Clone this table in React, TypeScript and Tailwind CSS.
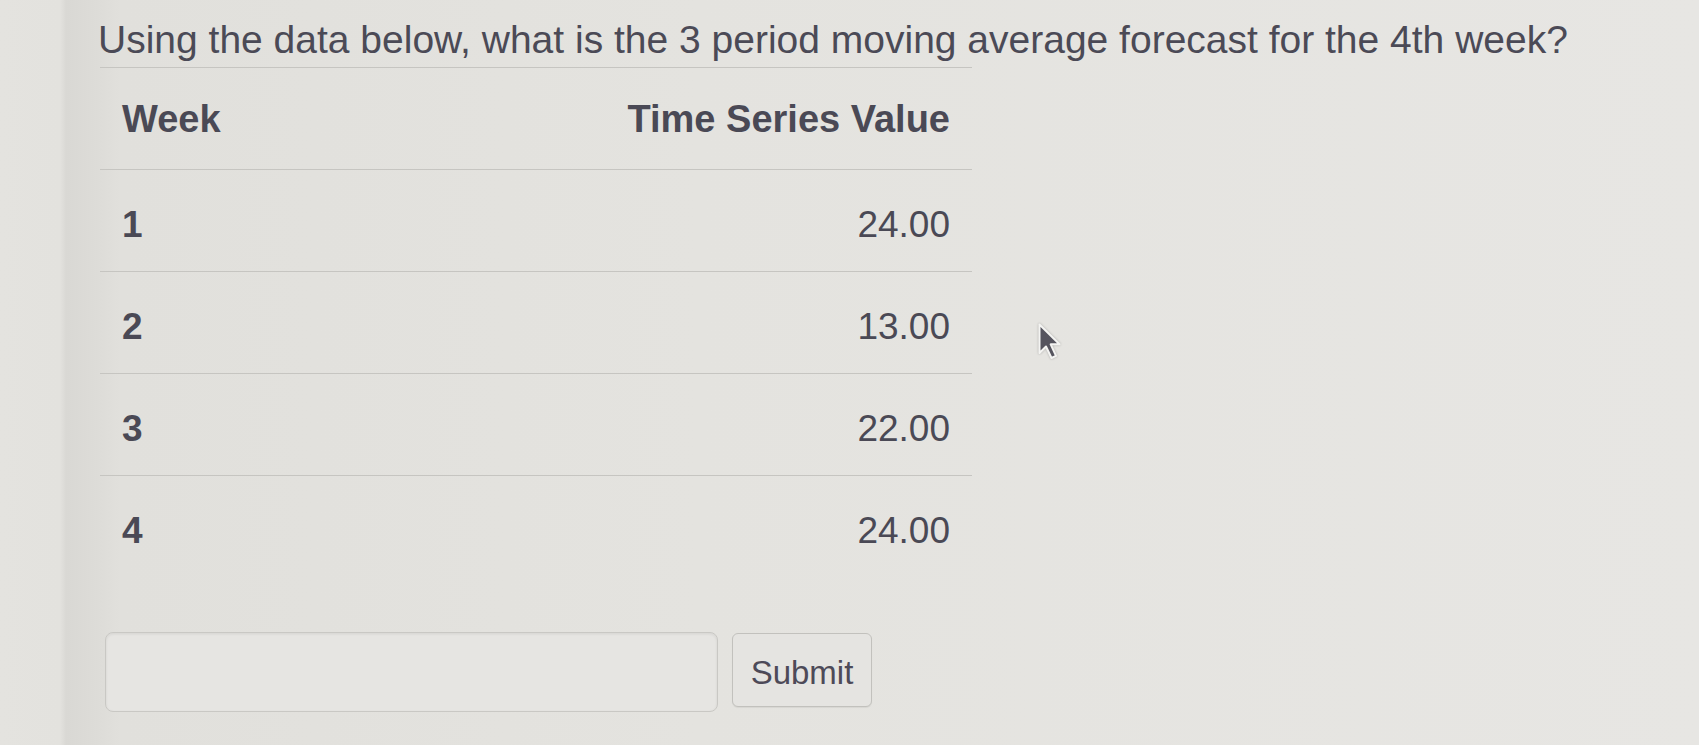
import React from 'react'

const rows = [
  { week: '1', value: '24.00' },
  { week: '2', value: '13.00' },
  { week: '3', value: '22.00' },
  { week: '4', value: '24.00' },
]

function Cursor() {
  return (
    <svg
      className="absolute left-[1035px] top-[321px] drop-shadow-[0_0_1px_rgba(0,0,0,0.25)]"
      width="30"
      height="46"
      viewBox="0 0 30 46"
    >
      <path
        d="M4.5 3.5 L4.5 32 L11 25.5 L16.5 37 L21 34.8 L15.7 23.3 L24.5 23.3 Z"
        fill="#55545e"
        stroke="#f4f4f2"
        strokeWidth="2"
        strokeLinejoin="round"
      />
    </svg>
  )
}

export default function App() {
  return (
    <div className="relative h-[745px] w-[1699px] overflow-hidden bg-[linear-gradient(90deg,#e4e3df_0px,#e3e2de_60px,#d9d8d4_66px,#dddcd8_98px,#e1e0dc_120px,#e4e3df_700px,#e7e6e3_1699px)] font-['Liberation_Sans',Arial,sans-serif] text-[#4a4955]">
      {/* Question */}
      <h1 className="pl-[98px] pt-[20px] text-[39px] font-normal leading-none text-[#4b4a56]">
        Using the data below, what is the 3 period moving average forecast for the 4th week?
      </h1>

      {/* Data table */}
      <table className="ml-[100px] mt-[8px] w-[872px] border-collapse">
        <thead>
          <tr className="border-t border-b border-[#c6c5c1]">
            <th className="pl-[22px] pt-[32px] pb-[31px] text-left text-[38px] font-bold leading-none text-[#4a4955]">
              Week
            </th>
            <th className="pr-[22px] pt-[32px] pb-[31px] text-right text-[38px] font-bold leading-none text-[#4a4955]">
              Time Series Value
            </th>
          </tr>
        </thead>
        <tbody>
          {rows.map((r, i) => (
            <tr key={r.week} className={i > 0 ? 'border-t border-[#c6c5c1]' : ''}>
              <td className="pl-[22px] pt-[36px] pb-[28px] text-[37px] font-bold leading-none">{r.week}</td>
              <td className="pr-[22px] pt-[36px] pb-[28px] text-right text-[37px] leading-none">{r.value}</td>
            </tr>
          ))}
        </tbody>
      </table>

      {/* Answer */}
      <div className="ml-[105px] mt-[55px] flex items-start gap-[14px]">
        <input
          type="text"
          className="h-[80px] w-[613px] rounded-[8px] border border-[#c9c8c4] bg-[#e6e5e2] shadow-[inset_0_1px_3px_rgba(0,0,0,0.08)] outline-none"
        />
        <button className="mt-[1px] h-[74px] w-[140px] rounded-[6px] border border-[#c2c1bd] bg-[#e5e4e1] pt-[5px] text-[33px] leading-none text-[#4d4a58] shadow-[0_1px_1px_rgba(0,0,0,0.06)]">
          Submit
        </button>
      </div>

      <Cursor />
    </div>
  )
}
